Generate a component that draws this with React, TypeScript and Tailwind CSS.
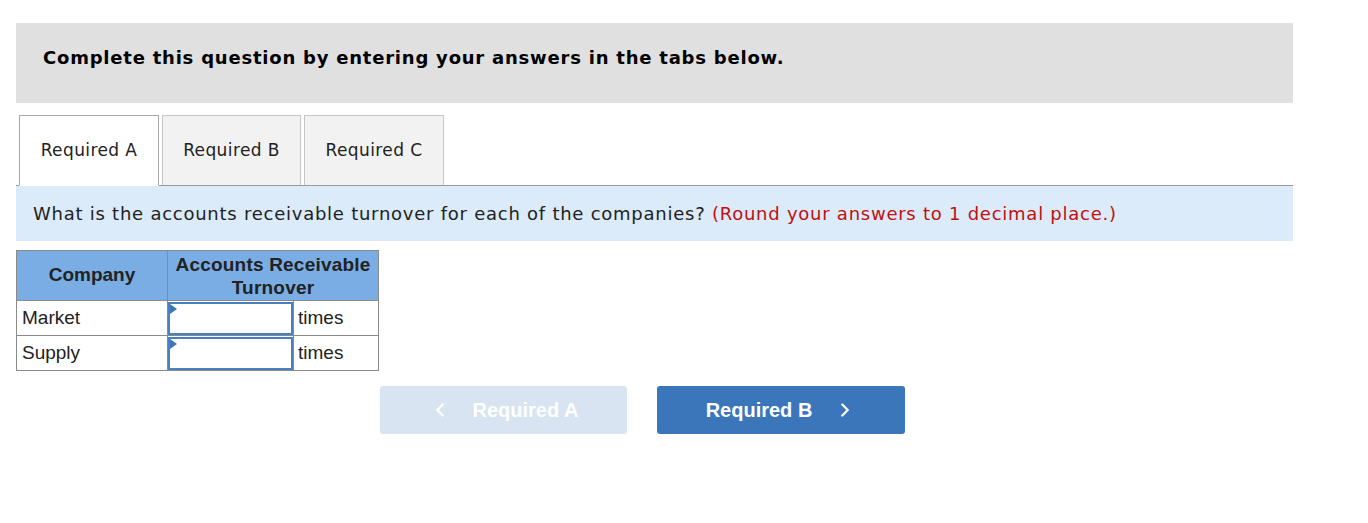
import { ChevronLeft, ChevronRight } from 'lucide-react';

const VERDANA = "font-['DejaVu_Sans',Verdana,sans-serif]";
const ARIAL = "font-['Liberation_Sans',Arial,sans-serif]";

// ─── Tabs ─────────────────────────────────────────────────────────────────────

const TABS = ['Required A', 'Required B', 'Required C'];

function TabBar() {
  return (
    <div className="flex items-end gap-[3px] border-b border-[#9a9a9a] pl-[3px] mt-[12px]">
      {TABS.map((t, i) => (
        <div
          key={t}
          className={
            i === 0
              ? 'w-[140px] h-[71px] -mb-px flex items-center justify-center bg-white border border-[#a8a8a8] border-b-white text-[17px] tracking-[0.4px] text-[#222]'
              : i === 1
                ? 'w-[139px] h-[70px] flex items-center justify-center bg-[#f2f2f2] border border-[#c6c6c6] border-b-0 text-[17px] tracking-[0.4px] text-[#222]'
                : 'w-[140px] h-[70px] flex items-center justify-center bg-[#f2f2f2] border border-[#c6c6c6] border-b-0 text-[17px] tracking-[0.4px] text-[#222]'
          }
        >
          {t}
        </div>
      ))}
    </div>
  );
}

// ─── Answer table ─────────────────────────────────────────────────────────────

const ROWS = ['Market', 'Supply'];

function AnswerTable() {
  return (
    <table className={`mt-[9px] border-collapse ${ARIAL} text-[#222] text-[19px]`}>
      <thead>
        <tr className="bg-[#79ade4] h-[50px]">
          <th className="w-[151px] border border-[#8a8a8a] font-bold">Company</th>
          <th colSpan={2} className="border border-[#8a8a8a] font-bold leading-[23px] tracking-[0.2px]">
            Accounts Receivable
            <br />
            Turnover
          </th>
        </tr>
      </thead>
      <tbody>
        {ROWS.map((r) => (
          <tr key={r} className="h-[35px]">
            <td className="border border-[#8a8a8a] pl-[5px]">{r}</td>
            <td className="w-[126px] border border-[#8a8a8a] p-0">
              <div className="relative h-[33px] border-2 border-[#4a7fc1] bg-white">
                <span className="absolute left-0 top-0 w-0 h-0 border-t-[5px] border-b-[5px] border-l-[7px] border-t-transparent border-b-transparent border-l-[#3a76b9]" />
              </div>
            </td>
            <td className="w-[85px] border border-[#8a8a8a] pl-[4px]">times</td>
          </tr>
        ))}
      </tbody>
    </table>
  );
}

// ─── Main ─────────────────────────────────────────────────────────────────────

export default function App() {
  return (
    <div className={`${VERDANA} w-[1368px] h-[523px] bg-white pt-[23px] pl-[16px]`}>
      <div className="w-[1277px]">
        <div className="h-[80px] bg-[#e0e0e0] pl-[27px] pt-[21px]">
          <p className="text-[18px] font-bold tracking-[0.78px] text-black">
            Complete this question by entering your answers in the tabs below.
          </p>
        </div>

        <TabBar />

        <div className="h-[55px] bg-[#dbebf9] pl-[17px] flex items-center text-[18px] tracking-[0.75px] text-[#222]">
          <p>
            What is the accounts receivable turnover for each of the companies?{' '}
            <span className="text-[#c10f0f]">(Round your answers to 1 decimal place.)</span>
          </p>
        </div>

        <AnswerTable />

        <div className={`flex gap-[30px] ml-[364px] mt-[15px] ${ARIAL}`}>
          <button className="w-[247px] h-[48px] rounded-[3px] bg-[#d8e4f1] text-white text-[20px] font-bold flex items-center justify-center gap-[22px]">
            <ChevronLeft size={22} strokeWidth={2.5} />
            Required A
          </button>
          <button className="w-[248px] h-[48px] rounded-[3px] bg-[#3a76b9] text-white text-[20px] font-bold flex items-center justify-center gap-[22px]">
            Required B
            <ChevronRight size={22} strokeWidth={2.5} />
          </button>
        </div>
      </div>
    </div>
  );
}
